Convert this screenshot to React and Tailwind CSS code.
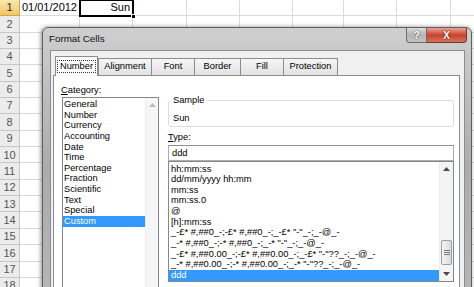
import clsx from "clsx";

const rows = Array.from({ length: 18 }, (_, i) => i + 1);
const colW = ["w-[60px]", "w-[53px]", "w-[54px]", "w-[53px]", "w-[53px]", "w-[51px]", "w-[53px]", "w-[54px]", "w-[53px]"];

const categories = [
  "General",
  "Number",
  "Currency",
  "Accounting",
  "Date",
  "Time",
  "Percentage",
  "Fraction",
  "Scientific",
  "Text",
  "Special",
  "Custom",
];

const formats = [
  "hh:mm:ss",
  "dd/mm/yyyy hh:mm",
  "mm:ss",
  "mm:ss.0",
  "@",
  "[h]:mm:ss",
  '_-£* #,##0_-;-£* #,##0_-;_-£* "-"_-;_-@_-',
  '_-* #,##0_-;-* #,##0_-;_-* "-"_-;_-@_-',
  '_-£* #,##0.00_-;-£* #,##0.00_-;_-£* "-"??_-;_-@_-',
  '_-* #,##0.00_-;-* #,##0.00_-;_-* "-"??_-;_-@_-',
  "ddd",
];

const tabs = [
  { label: "Number", w: "w-[43px]" },
  { label: "Alignment", w: "w-[54px]" },
  { label: "Font", w: "w-[44px]" },
  { label: "Border", w: "w-[47px]" },
  { label: "Fill", w: "w-[44px]" },
  { label: "Protection", w: "w-[55px]" },
];

function ArrowUp({ color = "#4a4a4a" }) {
  return (
    <svg width="7" height="4" viewBox="0 0 7 4">
      <path d="M0 4 L3.5 0 L7 4 Z" fill={color} />
    </svg>
  );
}

function ArrowDown({ color = "#4a4a4a" }) {
  return (
    <svg width="7" height="4" viewBox="0 0 7 4">
      <path d="M0 0 L3.5 4 L7 0 Z" fill={color} />
    </svg>
  );
}

function Sheet() {
  return (
    <div className="relative font-['Liberation_Sans',Arial,sans-serif] text-[11px] text-black">
      {rows.map((n) => (
        <div key={n} className="flex h-[16.35px]">
          <div
            className={clsx(
              "flex w-[20px] shrink-0 items-center justify-center border-r border-b",
              n === 1
                ? "border-[#c9a856] bg-gradient-to-b from-[#fbe7ad] to-[#f3c65e] text-[#2a2a2a]"
                : "border-[#c6c6c6] bg-[#ececec] text-[#555]"
            )}
          >
            {n}
          </div>
          {colW.map((w, i) => (
            <div
              key={i}
              className={clsx(
                "flex shrink-0 items-center justify-end border-r border-b border-[#dadada] pr-[2px]",
                w
              )}
            >
              {n === 1 && i === 0 && "01/01/2012"}
              {n === 1 && i === 1 && "Sun"}
            </div>
          ))}
        </div>
      ))}
      {/* active cell */}
      <div className="absolute left-[79px] top-[-1px] h-[18px] w-[55px] border-2 border-black" />
      <div className="absolute left-[131px] top-[14px] h-[5px] w-[5px] border border-white bg-black" />
    </div>
  );
}

function Dialog() {
  return (
    <div className="absolute left-[42px] top-[27px] h-[275px] w-[430px] rounded-t-[6px] border border-[#5f5f5f] bg-gradient-to-b from-[#cfcfcf] via-[#acacac] to-[#b6b6b6] font-['Liberation_Sans',Arial,sans-serif] text-[9.3px] text-black shadow-[-1px_0_4px_rgba(0,0,0,0.45)]">
      <div className="flex h-[22px] items-center pl-[6px] text-[9.8px] text-[#111]">Format Cells</div>

      {/* caption buttons */}
      <div className="absolute right-[4px] top-0 flex h-[15px]">
        <div className="flex w-[21px] items-center justify-center rounded-bl-[4px] border border-t-0 border-[#6a6a6a] bg-gradient-to-b from-[#dcdcdc] via-[#b4b4b4] to-[#c4c4c4] text-[10px] font-bold text-white [text-shadow:0_0_2px_#333]">
          ?
        </div>
        <div className="flex w-[40px] items-center justify-center rounded-br-[4px] border border-l-0 border-t-0 border-[#6a3a32] bg-gradient-to-b from-[#e6a493] via-[#c7412c] to-[#d9705b] text-[10px] font-bold text-white [text-shadow:0_0_2px_#4a0000]">
          X
        </div>
      </div>

      <div className="ml-[7px] mr-[6px] h-[300px] border border-[#8c8c8c] bg-[#f0f0f0] pl-[2px] pr-[4px] pt-[5px]">
        {/* tabs */}
        <div className="flex h-[19px] items-end pl-[2px]">
          {tabs.map((t, i) =>
            i === 0 ? (
              <div
                key={t.label}
                className={clsx(
                  "relative z-10 -mb-[1px] flex h-[20px] items-center justify-center border border-b-0 border-[#898c95] bg-white",
                  t.w
                )}
              >
                <span className="border border-dotted border-[#333] px-[2px] leading-[11px]">{t.label}</span>
              </div>
            ) : (
              <div
                key={t.label}
                className={clsx(
                  "flex h-[17px] items-center justify-center border border-b-0 border-[#898c95] bg-gradient-to-b from-[#f6f6f6] to-[#e2e2e2]",
                  i > 1 && "-ml-[1px]",
                  t.w
                )}
              >
                {t.label}
              </div>
            )
          )}
        </div>

        {/* panel */}
        <div className="flex h-[240px] border border-[#898c95] bg-white pt-[7px]">
          <div className="ml-[8px] flex w-[97px] shrink-0 flex-col">
            <div className="-ml-[1px] h-[14px] leading-[14px]">
              <span className="underline">C</span>ategory:
            </div>
            <div className="flex h-[200px] border border-[#828790]">
              <div className="min-w-0 flex-1 pt-[1px]">
                {categories.map((c) => (
                  <div
                    key={c}
                    className={clsx(
                      "h-[10.65px] pl-[1px] leading-[10.65px]",
                      c === "Custom" && "bg-[#3399ff] text-white"
                    )}
                  >
                    {c}
                  </div>
                ))}
              </div>
              <div className="w-[13px] border-l border-[#ededed] bg-[#f6f6f6]">
                <div className="flex h-[14px] items-center justify-center">
                  <ArrowUp color="#b9b9b9" />
                </div>
              </div>
            </div>
          </div>

          <div className="ml-[9px] flex w-[286px] shrink-0 flex-col">
            <div className="relative mt-[17px] h-[27px] rounded-[3px] border border-[#d9dde2]">
              <div className="absolute -top-[7px] left-[2px] bg-white px-[2px] leading-[12px]">Sample</div>
              <div className="pl-[4px] pt-[11px] leading-[12px]">Sun</div>
            </div>
            <div className="mt-[4px] leading-[12px]">
              <span className="underline">T</span>ype:
            </div>
            <div className="mt-[2px] h-[16px] border border-[#abadb3] border-t-[#8f9094] pl-[3px] leading-[14px]">
              ddd
            </div>
            <div className="flex h-[121px] border border-[#828790]">
              <div className="min-w-0 flex-1 overflow-hidden pt-[1.5px]">
                {formats.map((f) => (
                  <div
                    key={f}
                    className={clsx(
                      "h-[10.65px] whitespace-nowrap pl-[2px] leading-[10.65px]",
                      f === "ddd" && "bg-[#3399ff] text-white"
                    )}
                  >
                    {f}
                  </div>
                ))}
              </div>
              <div className="relative w-[14px] border-l border-[#ececec] bg-[#f4f4f4]">
                <div className="flex h-[14px] items-center justify-center">
                  <ArrowUp />
                </div>
                <div className="absolute left-[1px] right-[1px] top-[78px] flex h-[25px] flex-col items-center justify-center gap-[1px] rounded-[2px] border border-[#9c9c9c] bg-gradient-to-r from-[#f5f5f5] to-[#dadada]">
                  <div className="h-[1px] w-[6px] bg-[#777]" />
                  <div className="h-[1px] w-[6px] bg-[#777]" />
                  <div className="h-[1px] w-[6px] bg-[#777]" />
                </div>
                <div className="absolute bottom-0 left-0 right-0 flex h-[14px] items-center justify-center">
                  <ArrowDown />
                </div>
              </div>
            </div>
          </div>
        </div>
      </div>
    </div>
  );
}

export default function App() {
  return (
    <div className="relative h-[287px] w-[474px] overflow-hidden bg-white">
      <Sheet />
      <Dialog />
    </div>
  );
}
